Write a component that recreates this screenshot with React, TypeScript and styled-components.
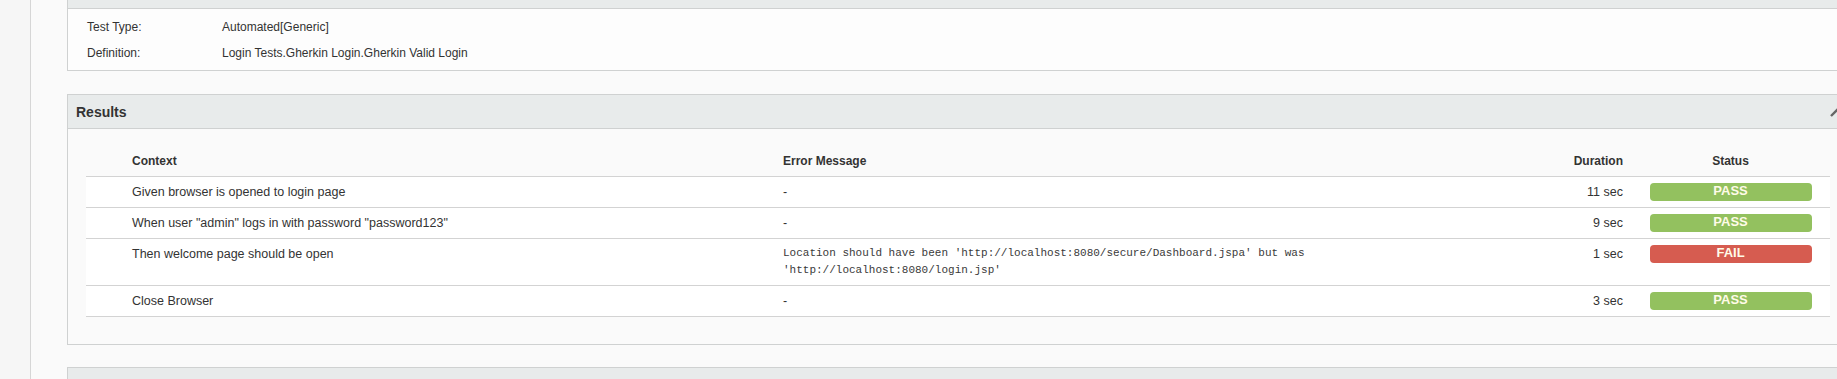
import React from 'react';
import styled, { createGlobalStyle } from 'styled-components';

const GlobalStyle = createGlobalStyle`
  html, body {
    margin: 0;
    padding: 0;
    overflow: hidden;
    background: #fafafa;
    font-family: "Liberation Sans", Arial, sans-serif;
    font-size: 12px;
    color: #333;
  }
`;

const Layout = styled.div`
  display: flex;
  height: 379px;
  overflow: hidden;
`;

const Sidebar = styled.div`
  width: 30px;
  flex-shrink: 0;
  background: #f6f6f6;
  border-right: 1px solid #d6d6d6;
`;

const Main = styled.div`
  flex: 1;
  padding-left: 36px;
  display: flex;
  flex-direction: column;
  gap: 23px;
  min-width: 0;
`;

const Panel = styled.section`
  width: 1782px;
  flex-shrink: 0;
  border: 1px solid #cfd1d1;
  background: #fdfdfd;
  box-sizing: border-box;
`;

const TopPanel = styled(Panel)`
  border-top: none;
`;

const NextPanel = styled(Panel)`
  height: 40px;
  margin-top: -1px;
`;

const PanelHeader = styled.header<{ $height?: number }>`
  height: ${p => p.$height ?? 33}px;
  background: #e8ebeb;
  border-bottom: 1px solid #cfd1d1;
  display: flex;
  align-items: center;
  justify-content: space-between;
  padding: 0 2px 0 8px;
`;

const PanelTitle = styled.h3`
  margin: 0;
  font-size: 14px;
  font-weight: bold;
  color: #333;
`;

const CollapseIcon = styled.svg`
  width: 16px;
  height: 12px;
`;

const InfoBody = styled.div`
  padding: 5px 0 4px 19px;
`;

const InfoRow = styled.div`
  display: flex;
  height: 26px;
  align-items: center;
`;

const InfoLabel = styled.span`
  width: 135px;
  flex-shrink: 0;
`;

const ResultsBody = styled.div`
  padding: 17px 18px 27px 18px;
  background: #fafafa;
`;

const Table = styled.table`
  width: 100%;
  border-collapse: collapse;
  table-layout: fixed;
`;

const Th = styled.th<{ $align?: string }>`
  text-align: ${p => p.$align ?? 'left'};
  font-weight: bold;
  padding: 6px 8px;
  line-height: 18px;
  border-bottom: 1px solid #d3d3d3;
  color: #333;
`;

const Tr = styled.tr`
  background: #fff;
`;

const Td = styled.td<{ $align?: string }>`
  text-align: ${p => p.$align ?? 'left'};
  vertical-align: top;
  padding: 6px 8px;
  font-size: 12.5px;
  line-height: 18px;
  border-bottom: 1px solid #d3d3d3;
`;

const StatusTd = styled(Td)`
  padding: 6px 0;
  text-align: center;
`;

const ErrorText = styled.span`
  font-family: "Liberation Mono", "DejaVu Sans Mono", monospace;
  font-size: 11px;
  line-height: 17px;
  display: block;
  color: #3a3a3a;
`;

const Badge = styled.div<{ $fail?: boolean }>`
  display: inline-block;
  width: 162px;
  height: 18px;
  line-height: 16px;
  border-radius: 4px;
  background: ${p => (p.$fail ? '#d65c50' : '#93c15f')};
  color: #fffbe8;
  font-weight: bold;
  font-size: 13px;
  vertical-align: top;
`;

interface Step {
  context: string;
  error?: string;
  duration: string;
  passed: boolean;
}

const steps: Step[] = [
  { context: 'Given browser is opened to login page', duration: '11 sec', passed: true },
  { context: 'When user "admin" logs in with password "password123"', duration: '9 sec', passed: true },
  {
    context: 'Then welcome page should be open',
    error: "Location should have been 'http://localhost:8080/secure/Dashboard.jspa' but was 'http://localhost:8080/login.jsp'",
    duration: '1 sec',
    passed: false,
  },
  { context: 'Close Browser', duration: '3 sec', passed: true },
];

const App: React.FC = () => {
  return (
    <>
      <GlobalStyle />
      <Layout>
        <Sidebar />
        <Main>
          <TopPanel>
            <PanelHeader $height={8} />
            <InfoBody>
              <InfoRow>
                <InfoLabel>Test Type:</InfoLabel>
                <span>Automated[Generic]</span>
              </InfoRow>
              <InfoRow>
                <InfoLabel>Definition:</InfoLabel>
                <span>Login Tests.Gherkin Login.Gherkin Valid Login</span>
              </InfoRow>
            </InfoBody>
          </TopPanel>

          <Panel>
            <PanelHeader>
              <PanelTitle>Results</PanelTitle>
              <CollapseIcon viewBox="0 0 16 12">
                <polyline points="1,10 8,3 15,10" fill="none" stroke="#666" strokeWidth="2.4" />
              </CollapseIcon>
            </PanelHeader>
            <ResultsBody>
              <Table>
                <colgroup>
                  <col style={{ width: 38 }} />
                  <col style={{ width: 651 }} />
                  <col style={{ width: 655 }} />
                  <col style={{ width: 201 }} />
                  <col style={{ width: 199 }} />
                </colgroup>
                <thead>
                  <tr>
                    <Th />
                    <Th>Context</Th>
                    <Th>Error Message</Th>
                    <Th $align="right">Duration</Th>
                    <Th $align="center">Status</Th>
                  </tr>
                </thead>
                <tbody>
                  {steps.map(step => (
                    <Tr key={step.context}>
                      <Td />
                      <Td>{step.context}</Td>
                      <Td>{step.error ? <ErrorText>{step.error}</ErrorText> : '-'}</Td>
                      <Td $align="right">{step.duration}</Td>
                      <StatusTd>
                        <Badge $fail={!step.passed}>{step.passed ? 'PASS' : 'FAIL'}</Badge>
                      </StatusTd>
                    </Tr>
                  ))}
                </tbody>
              </Table>
            </ResultsBody>
          </Panel>

          <NextPanel>
            <PanelHeader />
          </NextPanel>
        </Main>
      </Layout>
    </>
  );
};

export default App;
